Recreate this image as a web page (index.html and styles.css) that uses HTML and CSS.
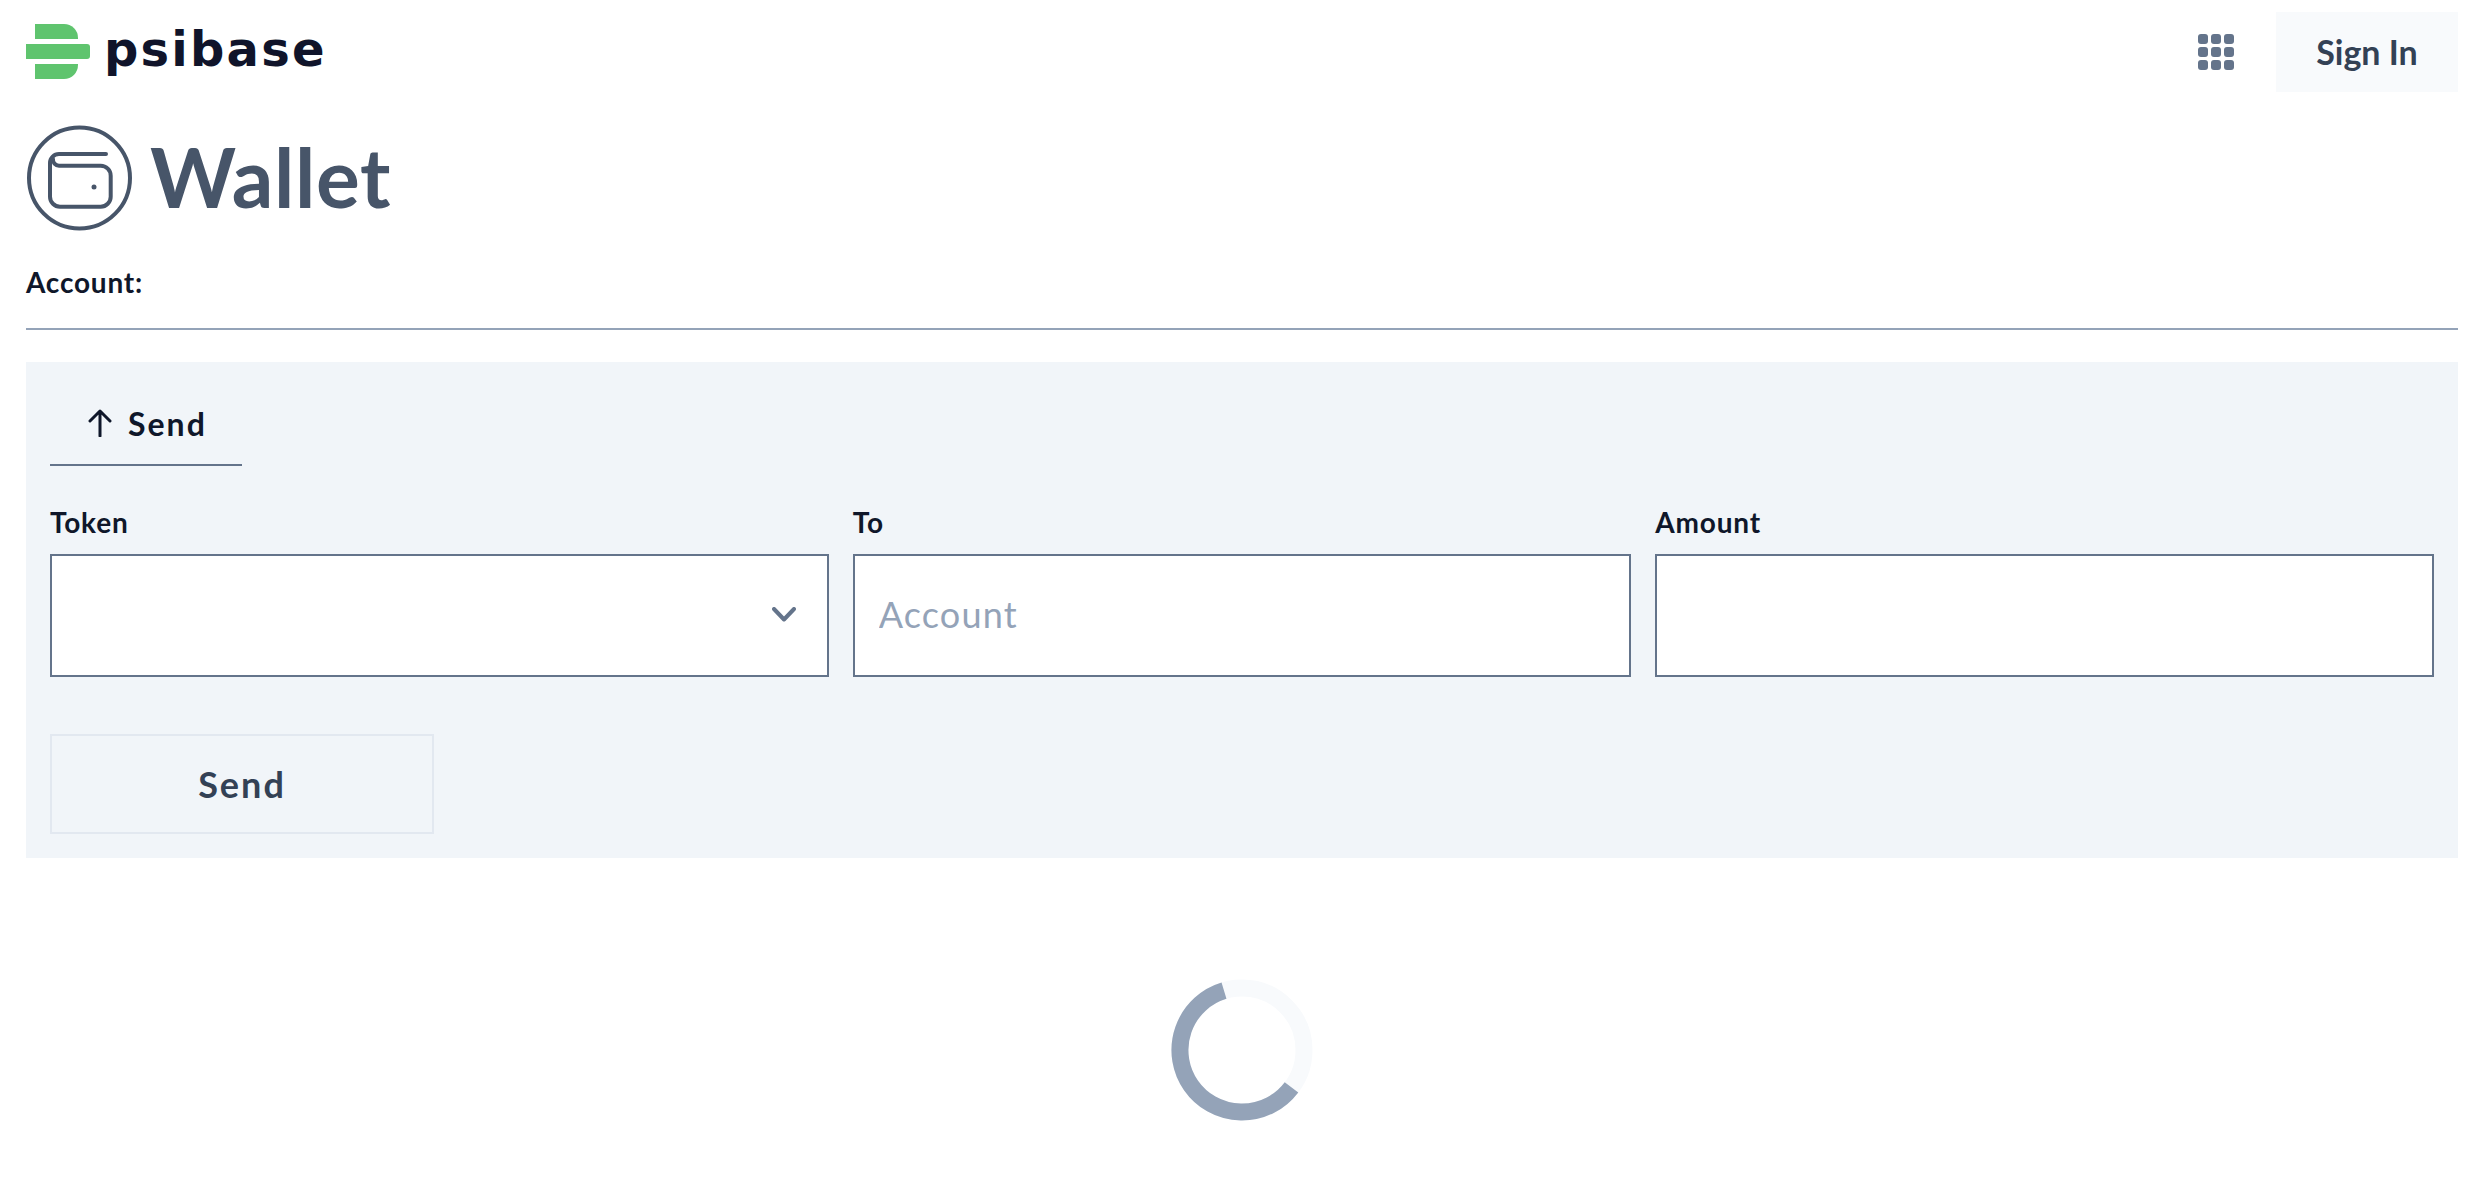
FILE: index.html
```html
<!DOCTYPE html>
<html lang="en">
<head>
    <meta charset="UTF-8">
    <title>Wallet</title>
    <link rel="stylesheet" href="styles.css">
</head>
<body>
    <header class="top-bar">
        <div class="brand">
            <svg class="brand-mark" width="64" height="56" viewBox="0 0 64 56">
                <path d="M9 0H38A14 14 0 0 1 52 14V15H9Z" />
                <path d="M0 20H61A3 3 0 0 1 64 23V32A3 3 0 0 1 61 35H0Z" />
                <path d="M9 40H52V41A14 14 0 0 1 38 55H9Z" />
            </svg>
            <span class="brand-name">psibase</span>
        </div>
        <div class="top-actions">
            <svg class="apps-icon" width="36" height="36" viewBox="0 0 36 36">
                <rect x="0" y="0" width="10" height="10" rx="3" />
                <rect x="13" y="0" width="10" height="10" rx="3" />
                <rect x="26" y="0" width="10" height="10" rx="3" />
                <rect x="0" y="13" width="10" height="10" rx="3" />
                <rect x="13" y="13" width="10" height="10" rx="3" />
                <rect x="26" y="13" width="10" height="10" rx="3" />
                <rect x="0" y="26" width="10" height="10" rx="3" />
                <rect x="13" y="26" width="10" height="10" rx="3" />
                <rect x="26" y="26" width="10" height="10" rx="3" />
            </svg>
            <button class="sign-in">Sign In</button>
        </div>
    </header>

    <div class="title-row">
        <svg class="wallet-icon" width="108" height="108" viewBox="0 0 108 108">
            <circle cx="53.5" cy="54" r="50.5" />
            <path d="M80 30H33A9 9 0 0 0 24 39V72.7A10 10 0 0 0 34 82.7H74.7A10 10 0 0 0 84.7 72.7V51.7A10 10 0 0 0 74.7 41.7H33A6 6 0 0 1 27 35" />
            <circle class="wallet-dot" cx="68" cy="63" r="2.5" />
        </svg>
        <h1>Wallet</h1>
    </div>

    <div class="account-row">Account:</div>

    <section class="panel">
        <button class="tab">
            <svg width="24" height="28" viewBox="0 0 24 28">
                <path d="M12 27V2M2 12L12 2L22 12" />
            </svg>
            Send
        </button>

        <div class="fields">
            <div class="field">
                <label for="token">Token</label>
                <div class="select-wrap">
                    <select id="token"></select>
                    <svg class="chevron" width="24" height="15" viewBox="0 0 24 15">
                        <path d="M2 2L12 12.5L22 2" />
                    </svg>
                </div>
            </div>
            <div class="field">
                <label for="to">To</label>
                <input type="text" id="to" placeholder="Account">
            </div>
            <div class="field">
                <label for="amount">Amount</label>
                <input type="text" id="amount">
            </div>
        </div>

        <button class="send-button">Send</button>
    </section>

    <div class="loading">
        <svg width="142" height="142" viewBox="0 0 142 142">
            <circle class="spinner-track" cx="71" cy="71" r="62" />
            <path class="spinner-arc" d="M120.5 108.3A62 62 0 1 1 53 11.7" />
        </svg>
    </div>
</body>
</html>
```

FILE: styles.css
```css
* {
    box-sizing: border-box;
}
body {
    margin: 0;
    padding: 12px 26px 0;
    background-color: white;
    font-family: Lato, sans-serif;
    color: #0f172a;
}
.top-bar {
    display: flex;
    justify-content: space-between;
    align-items: center;
    height: 80px;
    margin-bottom: 32px;
}
.brand {
    display: flex;
    align-items: center;
    gap: 14px;
}
.brand-mark {
    fill: #5fc46e;
}
.brand-name {
    padding-bottom: 6px;
    font-family: "DejaVu Sans", sans-serif;
    font-weight: 700;
    font-size: 48px;
    line-height: 56px;
    letter-spacing: 2.2px;
    color: #10142a;
}
.top-actions {
    display: flex;
    align-items: center;
    gap: 42px;
}
.apps-icon {
    fill: #64748b;
}
.sign-in {
    width: 182px;
    height: 80px;
    padding-bottom: 3px;
    border: none;
    background-color: #f8fafc;
    color: #334155;
    font-family: inherit;
    font-size: 34px;
    font-weight: 700;
}
.title-row {
    display: flex;
    align-items: center;
    gap: 16px;
    height: 108px;
}
.wallet-icon {
    fill: none;
    stroke: #475569;
    stroke-width: 4;
    stroke-linecap: round;
}
.wallet-dot {
    fill: #475569;
    stroke: none;
}
h1 {
    margin: 0 0 5px;
    font-size: 82px;
    font-weight: 700;
    letter-spacing: 0.6px;
    color: #475569;
}
.account-row {
    height: 98px;
    padding-top: 33px;
    border-bottom: 2px solid #94a3b8;
    font-size: 28px;
    font-weight: 700;
    letter-spacing: 0.8px;
}
.panel {
    margin-top: 32px;
    padding: 24px;
    background-color: #f1f5f9;
}
.tab {
    display: flex;
    align-items: center;
    gap: 16px;
    width: 192px;
    height: 80px;
    padding: 0 0 4px 38px;
    border: none;
    border-bottom: 2px solid #64748b;
    background: none;
    color: #0f172a;
    font-family: inherit;
    font-size: 32px;
    font-weight: 700;
    letter-spacing: 2px;
}
.tab svg {
    fill: none;
    stroke: #0f172a;
    stroke-width: 3;
    stroke-linecap: round;
    stroke-linejoin: round;
}
.fields {
    display: grid;
    grid-template-columns: repeat(3, 1fr);
    gap: 24px;
    margin-top: 36px;
}
label {
    display: block;
    height: 40px;
    margin-bottom: 12px;
    font-size: 28px;
    line-height: 40px;
    font-weight: 700;
    letter-spacing: 0.8px;
}
input[type="text"], select {
    display: block;
    width: 100%;
    height: 123px;
    padding: 0 24px 3px;
    border: 2px solid #64748b;
    border-radius: 0;
    background-color: white;
    font-family: inherit;
    font-size: 36px;
    letter-spacing: 1.2px;
    appearance: none;
}
input::placeholder {
    color: #94a3b8;
}
.select-wrap {
    position: relative;
}
.chevron {
    position: absolute;
    top: 53px;
    right: 33px;
    fill: none;
    stroke: #64748b;
    stroke-width: 4;
    stroke-linecap: round;
    stroke-linejoin: round;
}
.send-button {
    display: block;
    width: 384px;
    height: 100px;
    margin-top: 57px;
    padding-bottom: 2px;
    border: 2px solid #e2e8f0;
    background: none;
    color: #334155;
    font-family: inherit;
    font-size: 36px;
    font-weight: 700;
    letter-spacing: 2px;
}
.loading {
    display: flex;
    justify-content: center;
    margin-top: 121px;
}
.spinner-track {
    fill: none;
    stroke: #f8fafc;
    stroke-width: 17;
}
.spinner-arc {
    fill: none;
    stroke: #94a3b8;
    stroke-width: 17;
}
```
